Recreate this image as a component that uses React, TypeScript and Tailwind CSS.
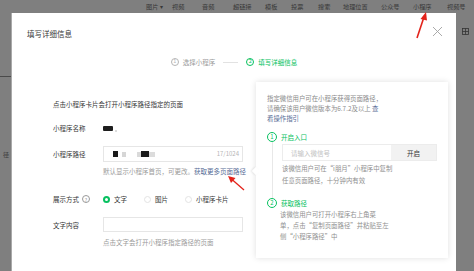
import React from "react";

const font = { fontFamily: '"Noto Sans CJK SC", "Noto Sans", sans-serif' };

const toolbar: [string, string][] = [
  ["图片 ▾", "w-[26px]"],
  ["视频", "w-[30px]"],
  ["音频", "w-[31px]"],
  ["超链接", "w-[32px]"],
  ["模板", "w-[26px]"],
  ["投票", "w-[27px]"],
  ["搜索", "w-[25px]"],
  ["地理位置", "w-[38px]"],
  ["公众号", "w-[32px]"],
  ["小程序", "w-[34px]"],
  ["视频号", "w-[24px]"],
];

const Radio = ({ on, label }: { on?: boolean; label: string }) => (
  <div className="flex items-center gap-[4px]">
    {on ? (
      <span className="w-[7px] h-[7px] rounded-full bg-[#07c160] flex items-center justify-center">
        <span className="w-[3px] h-[3px] rounded-full bg-white" />
      </span>
    ) : (
      <span className="w-[7px] h-[7px] rounded-full border border-[#e3e3e3]" />
    )}
    <span className="text-[#353535]">{label}</span>
  </div>
);

const StepDot = ({ n }: { n: string }) => (
  <span className="w-[10px] h-[10px] rounded-full border border-[#07c160] text-[#07c160] text-[6px] leading-none flex items-center justify-center">
    {n}
  </span>
);

export default function App() {
  return (
    <div
      className="relative w-[474px] h-[271px] bg-[#7f7f7f] overflow-hidden flex flex-col text-[6.5px]"
      style={font}
    >
      {/* page toolbar behind the overlay */}
      <div className="h-[13px] flex items-center pl-[146px] text-[6.2px] text-[#383838] shrink-0">
        {toolbar.map(([t, w]) => (
          <span key={t} className={`${w} whitespace-nowrap`}>
            {t}
          </span>
        ))}
      </div>

      <div className="flex flex-1">
        {/* left strip */}
        <div className="w-[12px] shrink-0 flex flex-col border-r border-[#a9a9a9]">
          <div className="mt-[63px] h-px w-[11px] bg-[#4a4a4a]" />
          <div className="mt-[73px] pl-[3px] text-[6px] text-[#3c3c3c]">径</div>
        </div>

        {/* modal */}
        <div className="w-[444px] shrink-0 bg-white flex flex-col">
          <div className="flex justify-between pl-[15px] pr-[13px] mt-[16px]">
            <span className="text-[7.5px] leading-[10px] text-[#353535]">填写详细信息</span>
            <svg width="11" height="11" viewBox="0 0 11 11" className="-mt-[3px]">
              <path d="M1 1 L10 10 M10 1 L1 10" stroke="#a0a0a0" strokeWidth="0.9" />
            </svg>
          </div>

          <div className="mt-[18px] h-[10px] flex items-center justify-center leading-[10px]">
            <span className="w-[8px] h-[8px] rounded-full border border-[#b5b5b5] text-[#b5b5b5] text-[5.5px] leading-none flex items-center justify-center">
              1
            </span>
            <span className="ml-[4px] text-[#9a9a9a]">选择小程序</span>
            <span className="mx-[8px] w-[15px] h-px bg-[#e2e2e2]" />
            <span className="w-[8px] h-[8px] rounded-full border border-[#07c160] text-[#07c160] text-[5.5px] leading-none flex items-center justify-center">
              2
            </span>
            <span className="ml-[4px] text-[#07c160]">填写详细信息</span>
          </div>

          <div className="mt-[15px] flex">
            {/* form */}
            <div className="pl-[41px] w-[236px] pt-[17px] leading-[10px] shrink-0">
              <div className="text-[#353535]">点击小程序卡片会打开小程序路径指定的页面</div>

              <div className="mt-[14px] flex items-center h-[10px]">
                <span className="w-[50px] text-[#353535]">小程序名称</span>
                <span className="w-[10px] h-[5px] rounded-[1px] bg-[#1e1e1e]" />
                <span className="ml-[2px] mt-[6px] w-[2px] h-[2px] bg-[#dcdcdc]" />
              </div>

              <div className="mt-[13px] flex items-center">
                <span className="w-[50px] text-[#353535]">小程序路径</span>
                <div className="w-[140px] h-[16px] border border-[#e6e6e6] flex items-center pl-[9px] pr-[3px]">
                  <span className="w-[5px] h-[6px] bg-[#1a1a1a]" />
                  <span className="ml-[4px] w-[4px] h-[5px] bg-[#d6d6d6]" />
                  <span className="ml-[11px] w-[4px] h-[5px] bg-[#dadada]" />
                  <span className="w-[8px] h-[6px] bg-[#1a1a1a]" />
                  <span className="w-[6px] h-[5px] bg-[#dcdcdc]" />
                  <span className="ml-auto text-[6px] text-[#b5b5b5]">17/1024</span>
                </div>
              </div>

              <div className="mt-[4px] pl-[50px] text-[#9a9a9a] whitespace-nowrap">
                默认显示小程序首页，可更改。<span className="text-[#576b95]">获取更多页面路径</span>
              </div>

              <div className="mt-[18px] flex items-center h-[10px]">
                <span className="w-[50px] flex items-center text-[#353535]">
                  展示方式
                  <span className="ml-[3px] w-[8px] h-[8px] rounded-full border border-[#9a9a9a] text-[#9a9a9a] text-[5px] leading-none flex items-center justify-center">
                    ?
                  </span>
                </span>
                <div className="flex items-center gap-[17px]">
                  <Radio on label="文字" />
                  <Radio label="图片" />
                  <Radio label="小程序卡片" />
                </div>
              </div>

              <div className="mt-[13px] flex items-center">
                <span className="w-[50px] text-[#353535]">文字内容</span>
                <div className="w-[140px] h-[15px] border border-[#e6e6e6]" />
              </div>

              <div className="mt-[5px] pl-[50px] text-[#9a9a9a]">点击文字会打开小程序指定路径的页面</div>
            </div>

            {/* help popover */}
            <div className="relative ml-[8px] w-[192px] h-[176px] bg-white shadow-[0_0_6px_rgba(0,0,0,0.13)] pl-[11px] pt-[12px] leading-[10px]">
              <span className="absolute -left-[3px] top-[86px] w-[6px] h-[6px] rotate-45 bg-white shadow-[-1px_1px_2px_rgba(0,0,0,0.08)]" />
              <div className="text-[#8a8a8a] text-[6.4px]">
                指定微信用户可在小程序获得页面路径，
                <br />
                请确保该用户微信版本为6.7.2及以上 <span className="text-[#576b95]">查</span>
                <br />
                <span className="text-[#576b95]">看操作指引</span>
              </div>

              <div className="mt-[8px] flex items-center gap-[4px] h-[10px]">
                <StepDot n="1" />
                <span className="text-[#07c160]">开启入口</span>
              </div>
              <div className="ml-[5px] border-l border-[#e8e8e8] pl-[9px] pt-[2px] pb-[11px]">
                <div className="w-[155px] h-[17px] border border-[#ececec] flex">
                  <span className="flex-1 pl-[8px] flex items-center text-[#c2c2c2]">请输入微信号</span>
                  <span className="w-[45px] bg-[#f2f2f2] flex items-center justify-center text-[#353535]">开启</span>
                </div>
                <div className="mt-[2px] leading-[12px] text-[#8f8f8f] text-[6.4px]">
                  该微信用户可在“i朋月”小程序中复制
                  <br />
                  任意页面路径，十分钟内有效
                </div>
              </div>

              <div className="flex items-center gap-[4px] h-[10px]">
                <StepDot n="2" />
                <span className="text-[#07c160]">获取路径</span>
              </div>
              <div className="mt-[1px] ml-[5px] pl-[8px] leading-[11px] text-[#8f8f8f] text-[6.4px]">
                该微信用户可打开小程序右上角菜
                <br />
                单，点击“复制页面路径”并粘贴至左
                <br />
                侧“小程序路径”中
              </div>
            </div>
          </div>
        </div>

        {/* right strip */}
        <div className="flex-1 flex justify-center pt-[15px]">
          <svg width="7" height="7" viewBox="0 0 7 7">
            <rect x="0.5" y="0.5" width="6" height="6" fill="none" stroke="#333" strokeWidth="0.8" />
            <path d="M0.5 3.5 H6.5 M3.5 0.5 V6.5" stroke="#333" strokeWidth="0.8" />
          </svg>
        </div>
      </div>

      {/* red annotation arrows */}
      <svg className="absolute inset-0 pointer-events-none" width="474" height="271">
        <path d="M417 38 L424 17" stroke="#e3231b" strokeWidth="1.6" />
        <path d="M426 12 L420.5 19 L427 20.5 Z" fill="#e3231b" />
        <path d="M244 190 L232 179.5" stroke="#e3231b" strokeWidth="1.3" />
        <path d="M228 176 L231 183 L235.5 178 Z" fill="#e3231b" />
      </svg>
    </div>
  );
}
